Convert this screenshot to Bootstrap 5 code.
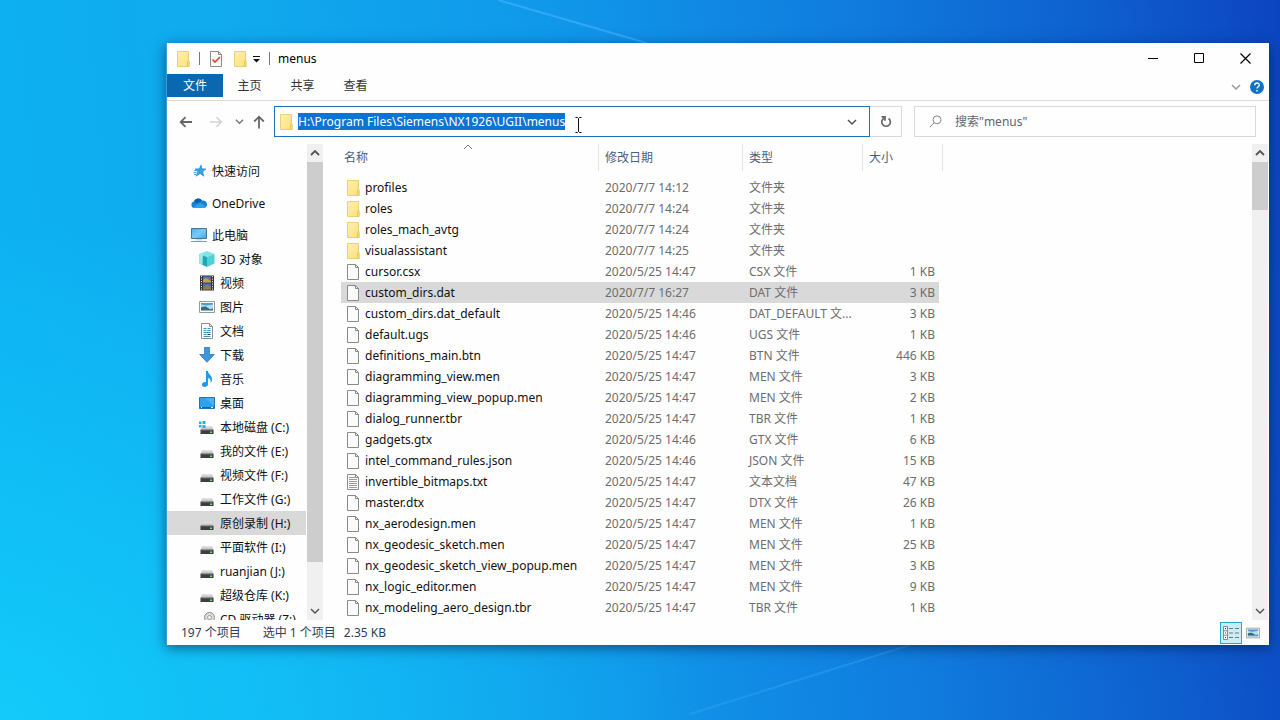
<!DOCTYPE html>
<html lang="zh-CN">
<head>
<meta charset="utf-8">
<meta name="viewport" content="width=device-width, initial-scale=1">
<title>menus</title>
<link href="https://cdn.jsdelivr.net/npm/bootstrap@5.3.0/dist/css/bootstrap.min.css" rel="stylesheet">
<style>
  body { font: 12px/21px "Noto Sans", "Noto Sans CJK SC", sans-serif; color: #111; }
  button, input { font: inherit; }
  .desktop {
    position: relative; height: 100vh; min-height: 480px; padding: 43px 11px 75px 166px;
    background:
      radial-gradient(ellipse 55% 70% at 0% 100%, rgba(20,208,252,.8), rgba(20,208,252,0)),
      linear-gradient(84deg, #0cb2f2 0%, #10aaee 22%, #1098ea 46%, #107cde 68%, #0e60cf 86%, #0c44c0 100%);
  }
  .rays { left: 0; top: 0; width: 100%; height: 100%; }
  .explorer { position: relative; background: #fefefe; border-left: 1px solid #3a9fd0; box-shadow: 0 3px 12px rgba(0,20,60,.55); }
  .explorer > * { flex-shrink: 0; }
  .bare { background: none; border: 0; padding: 0; color: inherit; display: flex; align-items: center; justify-content: center; }
  .titlebar { height: 31px; padding: 0 1px 0 8px; }
  .sep { width: 1px; height: 13px; background: #777; }
  .caption-btn { width: 46px; height: 31px; }
  .ribbon { height: 27px; border-bottom: 1px solid #dadbdc; }
  .ribbon .nav-link { font-size: 12px; line-height: 23px; height: 23px; padding: 0; width: 53px; text-align: center; color: #333; border-radius: 0; }
  .ribbon .nav-link.active { background: #0a68b0; color: #fff; width: 56px; }
  .toolbar { height: 43px; padding: 5px 13px 7px 8px; }
  .address { border: 1px solid #1a73b8; width: 596px; min-width: 200px; flex: 0 1 596px; background: #fff; padding-left: 3px; }
  .address input { border: 0; outline: 0; padding: 0; margin-left: 4px; height: 17px; line-height: 17px; color: #222; background: transparent; }
  .address input::selection { background: #0c74d4; color: #fff; }
  .ibeam { left: 299px; top: 9px; pointer-events: none; }
  .refresh { width: 32px; border: 1px solid #d9d9d9; border-left: 0; }
  .search { margin-left: 12px; padding-left: 14px; gap: 13px; border: 1px solid #d9d9d9; }
  .search input { border: 0; outline: 0; padding: 0; background: transparent; }
  .search input::placeholder { color: #666; opacity: 1; }
  .content { flex: 1 1 0; min-height: 0; }
  .side { width: 140px; padding-top: 15px; }
  .side a { display: flex; align-items: center; gap: 5px; height: 24px; flex: none; color: #111; text-decoration: none; white-space: nowrap; padding-left: 32px; }
  .side .root { padding-left: 24px; margin-bottom: 8px; }
  .side .root.last { margin-bottom: 0; }
  .side .current { background: #d9d9d9; margin-right: 1px; }
  .side svg, .files svg { flex: none; }
  .bar { width: 16px; background: #f0f0f0; flex: none; }
  .bar button { height: 18px; width: 100%; flex: none; color: #555; }
  .bar.outer { margin-right: 1px; }
  .thumb { background: #cdcdcd; }
  .filepane { padding-left: 18px; }
  .files { table-layout: fixed; width: 602px; border-collapse: separate; border-spacing: 0; }
  .files th { font-weight: 400; color: #4c607a; height: 27px; padding: 0 6px; border-right: 1px solid #e5e5e5; }
  .files th:first-child { padding-left: 3px; }
  .files td { height: 21px; line-height: 21px; padding: 0 6px; color: #6d6d6d; white-space: nowrap; overflow: hidden; text-overflow: ellipsis; }
  .files td:first-child { padding-left: 4px; color: #111; }
  .files td:nth-child(3) { padding-right: 11px; }
  .files td:nth-child(4) { text-align: right; padding-right: 4px; }
  .files td:last-child { padding: 0; }
  .files tbody::before { content: ""; display: block; height: 6px; }
  .files .picked td:not(:last-child) { background: #d9d9d9; }
  .name-cell { display: flex; align-items: center; gap: 4px; }
  .sort-mark { left: 140px; top: -1px; color: #777; }
  .statusbar { height: 25px; padding: 0 5px 0 14px; color: #2c3f5c; }
  .view-on { width: 22px; height: 22px; background: #c8ecf8; border: 1px solid #30a5cc; }
</style>
</head>
<body>
<svg width="0" height="0" class="position-absolute" aria-hidden="true">
  <defs>
    <linearGradient id="gFold" x1="0" y1="0" x2="1" y2="1"><stop offset="0" stop-color="#fff0ac"/><stop offset="1" stop-color="#fbe07c"/></linearGradient>
    <linearGradient id="gScreen" x1="0" y1="0" x2="1" y2="1"><stop offset="0" stop-color="#4fb0ec"/><stop offset=".5" stop-color="#7ccbf6"/><stop offset="1" stop-color="#38a4ea"/></linearGradient>
    <linearGradient id="gDrive" x1="0" y1="0" x2="0" y2="1"><stop offset="0" stop-color="#e8e8e8"/><stop offset="1" stop-color="#b4b4b4"/></linearGradient>
    <symbol id="folder" viewBox="0 0 16 16"><path d="M2.500.5h11v10h.5v5H2.500z" fill="url(#gFold)" stroke="#ead078"/><path d="M12.500 15.500v-5l1-1h.5v6z" fill="#fde794" stroke="#e2c050" stroke-width=".8"/></symbol>
    <symbol id="page" viewBox="0 0 16 16"><path d="M2.500.5h8l3 3v12h-11z" fill="#fafbfb" stroke="#8a8a8a"/><path d="M10.500.5v3h3" fill="none" stroke="#8a8a8a"/></symbol>
    <symbol id="textpage" viewBox="0 0 16 16"><path d="M2.500.5h8l3 3v12h-11z" fill="#fafbfb" stroke="#8a8a8a"/><path d="M4 3.500h6M4 5.500h8M4 7.500h8M4 9.500h8M4 11.500h8M4 13.500h8" stroke="#999"/><path d="M10.500.5v3h3" fill="none" stroke="#8a8a8a"/></symbol>
    <symbol id="star" viewBox="0 0 16 16"><path d="M10 2l1 3.800 4 .2-3.300 2.600 1 4.600-3.600-2.700-4 2.700 1.800-4.600L4 6l4.300-.2z" fill="#36a2e6" stroke="#1b80c6" stroke-width=".6"/><path d="M3 7.500h2.500M2.500 9.500h3M3 11.500h2" stroke="#4aaee8"/></symbol>
    <symbol id="cloud" viewBox="0 0 16 16"><path d="M3.500 13a3.300 3.300 0 0 1-.6-6.500A4.500 4.500 0 0 1 11 5.600a3.900 3.900 0 0 1 5 3.800C16 11.500 14.500 13 12.700 13z" fill="#1583d4"/><path d="M2.900 6.500A4.500 4.500 0 0 1 11 5.600L6.500 8.500z" fill="#0b5cad"/><path d="M1.500 12.500l7.500-5 6 4.300c-.6.800-1.400 1.200-2.300 1.200H3.500c-.8 0-1.500-.2-2-.5z" fill="#2ea0e6"/></symbol>
    <symbol id="pc" viewBox="0 0 16 16"><path d="M.5 1.500h15v10H.5z" fill="url(#gScreen)" stroke="#4d7388"/><path d="M5 12h6v1.500H5z" fill="#c5dce8"/><path d="M0 14.500h16" stroke="#7f9aac"/></symbol>
    <symbol id="cube" viewBox="0 0 16 16"><path d="M8 0l7.500 3L8 6 .5 3z" fill="#83e2e6"/><path d="M.5 3L8 6v10L.5 12.500z" fill="#21a6b4"/><path d="M15.500 3L8 6v10l7.500-3.500z" fill="#4fd0d6"/><path d="M.5 3L4 1.500 3.500 14l-3-1.500z" fill="#9aebe8"/></symbol>
    <symbol id="film" viewBox="0 0 16 16"><path d="M1 .5h14v15H1z" fill="#333"/><path d="M4 1.500h8v6H4z" fill="#5678c8"/><path d="M4 5l3-2 5 3v1.500H4z" fill="#c8a040"/><path d="M9 2h3v3z" fill="#d04838"/><path d="M4 8.500h8v6H4z" fill="#4a70c4"/><path d="M4 13l4-3 4 2v2.500H4z" fill="#a0783c"/><path d="M2.500 1v14M13.500 1v14" stroke="#eee" stroke-dasharray="1.200 1.300"/></symbol>
    <symbol id="photo" viewBox="0 0 16 16"><path d="M.5 2.500h15v11H.5z" fill="#fff" stroke="#929aa0"/><path d="M2 4h12v8H2z" fill="#b4dcf4"/><path d="M2 4h12v1.500L7 6.500 2 5.500z" fill="#5596cc"/><path d="M2 8.500q4-2 7 .5t5 0v2H2z" fill="#356e72"/><path d="M2 11h12v1H2z" fill="#8fb8c8"/></symbol>
    <symbol id="doc" viewBox="0 0 16 16"><path d="M2.500.5h8l3 3v12h-11z" fill="#fff" stroke="#8b8f92"/><path d="M10.500.5v3h3" fill="none" stroke="#8b8f92"/><path d="M4.500 5.500h3M8.500 5.500h3M4.500 7.500h3M8.500 7.500h3M4.500 9.500h7M4.500 11.500h3M4.500 13.500h7" stroke="#3d96c4"/><path d="M8.500 11.500h3" stroke="#333"/></symbol>
    <symbol id="down" viewBox="0 0 16 16"><path d="M5.500.5h5v7h4.800L8 15.300.7 7.500h4.800z" fill="#3f96dc" stroke="#2c79ba" stroke-width=".8"/></symbol>
    <symbol id="note" viewBox="0 0 16 16"><path d="M7 0h2c0 3.500 4.500 4 4 9-.1 1.200-.8 2.400-1.600 3 .8-3-.4-4.500-2.400-5v6.200C9 15 7.200 16 5.500 16S3 15 3 13.500 4.500 11 6 11c.4 0 .7 0 1 .2z" fill="#1e9be8"/></symbol>
    <symbol id="desk" viewBox="0 0 16 16"><path d="M.5 2.500h15v11H.5z" fill="#2da0ee" stroke="#1a76b8"/><path d="M6 3h9v8z" fill="#56b8f6" opacity=".7"/><path d="M1 12.500h14" stroke="#17659f"/><path d="M2 12.500h1M12 12.500h2" stroke="#fff"/></symbol>
    <symbol id="drive" viewBox="0 0 16 16"><path d="M3 7h10l1.500 4h-13z" fill="url(#gDrive)"/><path d="M1.500 11h13v4h-13z" fill="#3c3f40"/><path d="M1.500 10.500h13v1h-13z" fill="#6a6d6e"/><path d="M11 12.500h2v1.500h-2z" fill="#5bef6a"/></symbol>
    <symbol id="sysdrive" viewBox="0 0 16 16"><path d="M3 7h10l1.500 4h-13z" fill="url(#gDrive)"/><path d="M1.500 11h13v4h-13z" fill="#3c3f40"/><path d="M1.500 10.500h13v1h-13z" fill="#6a6d6e"/><path d="M11 12.500h2v1.500h-2z" fill="#5bef6a"/><path d="M0 2.500h2.500v2.500H0zM3.500 2h3v3h-3zM0 6h2.500v2.500H0zM3.500 6h3v3h-3z" fill="#22b4e4"/></symbol>
    <symbol id="disc" viewBox="0 0 16 16"><circle cx="10.500" cy="6.500" r="5" fill="#ddd" stroke="#8c8c8c"/><circle cx="10.500" cy="6.500" r="2" fill="#fff" stroke="#999"/><path d="M1.500 11h10v3h-10z" fill="#777"/></symbol>
    <symbol id="cd" viewBox="0 0 10 10"><path d="M1 3l4 4 4-4" fill="none" stroke="currentColor" stroke-width="1.500"/></symbol>
    <symbol id="cu" viewBox="0 0 10 10"><path d="M1 7l4-4 4 4" fill="none" stroke="currentColor" stroke-width="1.800"/></symbol>
  </defs>
</svg>

<div class="desktop">
  <svg class="rays position-absolute" viewBox="0 0 1280 720" preserveAspectRatio="none" aria-hidden="true">
    <path d="M498 0L650 44" stroke="#4ab8ff" stroke-width="2" opacity=".55"/>
    <path d="M690 714L910 645" stroke="#3aa8f4" stroke-width="2" opacity=".4"/>
  </svg>
  <main class="explorer d-flex flex-column h-100">
    <header class="titlebar d-flex align-items-center">
      <svg width="16" height="16"><use href="#folder"/></svg>
      <span class="sep ms-2"></span>
      <button class="bare ms-2" aria-label="属性"><svg width="16" height="16" viewBox="0 0 16 16"><path d="M2.500.5h8l3 3v12h-11z" fill="#fafafa" stroke="#8a8a8a"/><path d="M10.500.5v3h3" fill="none" stroke="#8a8a8a"/><path d="M4.500 8.500l2.500 2.500 5-5" fill="none" stroke="#dc4a26" stroke-width="1.600"/></svg></button>
      <button class="bare ms-2" aria-label="新建文件夹"><svg width="16" height="16"><use href="#folder"/></svg></button>
      <button class="bare ms-1" aria-label="自定义快速访问工具栏"><svg width="9" height="9" viewBox="0 0 9 9"><path d="M1 2.500h7" stroke="#111"/><path d="M1 5h7L4.500 8.500z" fill="#111"/></svg></button>
      <span class="sep ms-2"></span>
      <span class="ms-2 text-black">menus</span>
      <div class="ms-auto d-flex">
        <button class="bare caption-btn" aria-label="最小化"><svg width="11" height="11"><path d="M0 5.500h10" stroke="#000"/></svg></button>
        <button class="bare caption-btn" aria-label="最大化"><svg width="11" height="11"><path d="M.5.5h9v9h-9z" fill="none" stroke="#000"/></svg></button>
        <button class="bare caption-btn" aria-label="关闭"><svg width="11" height="11"><path d="M.5.500l10 10M10.500.5l-10 10" stroke="#000" stroke-width="1.200"/></svg></button>
      </div>
    </header>

    <nav class="ribbon nav flex-nowrap">
      <a class="nav-link active" href="#">文件</a>
      <a class="nav-link" href="#">主页</a>
      <a class="nav-link" href="#">共享</a>
      <a class="nav-link" href="#">查看</a>
      <div class="ms-auto d-flex align-items-center gap-2 pe-1">
        <button class="bare" style="color:#999" aria-label="展开功能区"><svg width="10" height="10"><use href="#cd"/></svg></button>
        <button class="bare" aria-label="帮助"><svg width="16" height="16" viewBox="0 0 16 16"><circle cx="8" cy="8" r="7" fill="#0f72c4"/><path d="M5.800 6.300c0-3 4.500-3 4.500-.3C10.300 7.700 8 7.800 8 9.500M8 11v1.500" fill="none" stroke="#fff" stroke-width="1.400"/></svg></button>
      </div>
    </nav>

    <div class="toolbar d-flex">
      <button class="bare px-1" aria-label="后退"><svg width="14" height="14" viewBox="0 0 14 14"><path d="M13 7H2M6.500 2.200L1.700 7l4.800 4.800" fill="none" stroke="#666" stroke-width="1.800"/></svg></button>
      <button class="bare px-1 ms-2" aria-label="前进"><svg width="14" height="14" viewBox="0 0 14 14"><path d="M1 7h11M7.500 2.200L12.300 7l-4.800 4.800" fill="none" stroke="#d2d2d2" stroke-width="1.600"/></svg></button>
      <button class="bare ms-2" style="color:#777" aria-label="最近位置"><svg width="9" height="9"><use href="#cd"/></svg></button>
      <button class="bare ms-2 me-2" aria-label="上移"><svg width="14" height="14" viewBox="0 0 14 14"><path d="M7 13.500V2M2.200 6.500L7 1.700l4.800 4.800" fill="none" stroke="#666" stroke-width="1.800"/></svg></button>
      <div class="address d-flex align-items-center position-relative">
        <svg class="flex-shrink-0" width="16" height="16"><use href="#folder"/></svg>
        <input class="flex-grow-1" id="path" type="text" aria-label="地址" spellcheck="false" value="H:\Program Files\Siemens\NX1926\UGII\menus">
        <button class="bare px-2 me-1" style="color:#555" aria-label="以前的位置"><svg width="10" height="10"><use href="#cd"/></svg></button>
        <svg class="ibeam position-absolute" width="10" height="18" viewBox="0 0 10 18"><path d="M1.500 1.500h2l1 1 1-1h2M1.500 16.500h2l1-1 1 1h2M4.500 2.500v13" fill="none" stroke="#111"/></svg>
      </div>
      <button class="bare refresh" aria-label="刷新"><svg width="12" height="14" viewBox="0 0 12 14"><path d="M4 3.200A4.300 4.300 0 1 0 8.600 3.500M1.500 1.800h3.500v4" fill="none" stroke="#666" stroke-width="1.700"/></svg></button>
      <label class="search d-flex align-items-center flex-grow-1">
        <svg width="13" height="13" viewBox="0 0 13 13"><circle cx="8" cy="4.800" r="4" fill="none" stroke="#888"/><path d="M5.200 7.700L.8 12.200" stroke="#888"/></svg>
        <input class="flex-grow-1" type="text" aria-label="搜索" placeholder='搜索"menus"'>
      </label>
    </div>

    <div class="content d-flex overflow-hidden">
      <nav class="side d-flex flex-column overflow-hidden flex-shrink-0" id="side" aria-label="导航窗格"></nav>
      <div class="bar d-flex flex-column">
        <button class="bare" aria-label="向上滚动"><svg width="10" height="10"><use href="#cu"/></svg></button>
        <div class="thumb" style="height:84%"></div>
        <button class="bare mt-auto" aria-label="向下滚动"><svg width="10" height="10"><use href="#cd"/></svg></button>
      </div>
      <section class="filepane flex-grow-1 overflow-hidden position-relative">
        <table class="files">
          <colgroup><col style="width:258px"><col style="width:144px"><col style="width:120px"><col style="width:76px"><col style="width:4px"></colgroup>
          <thead><tr>
            <th scope="col">名称</th><th scope="col">修改日期</th><th scope="col">类型</th><th scope="col" colspan="2">大小</th>
          </tr></thead>
          <tbody id="rows"></tbody>
        </table>
        <svg class="sort-mark position-absolute" width="10" height="8" viewBox="0 0 10 8"><path d="M1 6l4-4 4 4" fill="none" stroke="currentColor"/></svg>
      </section>
      <div class="bar outer d-flex flex-column">
        <button class="bare" aria-label="向上滚动"><svg width="10" height="10"><use href="#cu"/></svg></button>
        <div class="thumb" style="height:10%"></div>
        <button class="bare mt-auto" aria-label="向下滚动"><svg width="10" height="10"><use href="#cd"/></svg></button>
      </div>
    </div>

    <footer class="statusbar d-flex align-items-center">
      <span>197 个项目</span><span style="margin-left:22px">选中 1 个项目</span><span class="ms-2">2.35 KB</span>
      <button class="bare view-on ms-auto" aria-label="详细信息"><svg width="18" height="14" viewBox="0 0 18 14"><path d="M1.500.5h4v13h-4zM1.500 4.800h4M1.500 9.200h4" fill="#fff" stroke="#888"/><path d="M3 2.500h1M3 7h1M3 11.500h1" stroke="#333"/><path d="M7 2.500h4M13 2.500h4M7 7h4M13 7h4M7 11.500h4M13 11.500h4" stroke="#777"/></svg></button>
      <button class="bare ms-1 me-1" aria-label="大图标"><svg width="14" height="14"><use href="#photo"/></svg></button>
    </footer>
  </main>
</div>

<script src="https://cdn.jsdelivr.net/npm/bootstrap@5.3.0/dist/js/bootstrap.bundle.min.js"></script>
<script>
  const icon = id => `<svg width="16" height="16" aria-hidden="true"><use href="#${id}"/></svg>`;
  const places = [
    ["star", "快速访问", "root"], ["cloud", "OneDrive", "root"], ["pc", "此电脑", "root last"],
    ["cube", "3D 对象"], ["film", "视频"], ["photo", "图片"], ["doc", "文档"], ["down", "下载"],
    ["note", "音乐"], ["desk", "桌面"], ["sysdrive", "本地磁盘 (C:)"], ["drive", "我的文件 (E:)"],
    ["drive", "视频文件 (F:)"], ["drive", "工作文件 (G:)"], ["drive", "原创录制 (H:)", "current"],
    ["drive", "平面软件 (I:)"], ["drive", "ruanjian (J:)"], ["drive", "超级仓库 (K:)"], ["disc", "CD 驱动器 (Z:)"]
  ];
  document.getElementById("side").innerHTML = places
    .map(([i, t, c]) => `<a href="#" class="${c || ""}">${icon(i)}<span>${t}</span></a>`).join("");

  const files = [
    ["profiles", "2020/7/7 14:12", "文件夹", ""], ["roles", "2020/7/7 14:24", "文件夹", ""],
    ["roles_mach_avtg", "2020/7/7 14:24", "文件夹", ""], ["visualassistant", "2020/7/7 14:25", "文件夹", ""],
    ["cursor.csx", "2020/5/25 14:47", "CSX 文件", "1 KB"], ["custom_dirs.dat", "2020/7/7 16:27", "DAT 文件", "3 KB"],
    ["custom_dirs.dat_default", "2020/5/25 14:46", "DAT_DEFAULT 文...", "3 KB"], ["default.ugs", "2020/5/25 14:46", "UGS 文件", "1 KB"],
    ["definitions_main.btn", "2020/5/25 14:47", "BTN 文件", "446 KB"], ["diagramming_view.men", "2020/5/25 14:47", "MEN 文件", "3 KB"],
    ["diagramming_view_popup.men", "2020/5/25 14:47", "MEN 文件", "2 KB"], ["dialog_runner.tbr", "2020/5/25 14:47", "TBR 文件", "1 KB"],
    ["gadgets.gtx", "2020/5/25 14:46", "GTX 文件", "6 KB"], ["intel_command_rules.json", "2020/5/25 14:46", "JSON 文件", "15 KB"],
    ["invertible_bitmaps.txt", "2020/5/25 14:47", "文本文档", "47 KB"], ["master.dtx", "2020/5/25 14:47", "DTX 文件", "26 KB"],
    ["nx_aerodesign.men", "2020/5/25 14:47", "MEN 文件", "1 KB"], ["nx_geodesic_sketch.men", "2020/5/25 14:47", "MEN 文件", "25 KB"],
    ["nx_geodesic_sketch_view_popup.men", "2020/5/25 14:47", "MEN 文件", "3 KB"], ["nx_logic_editor.men", "2020/5/25 14:47", "MEN 文件", "9 KB"],
    ["nx_modeling_aero_design.tbr", "2020/5/25 14:47", "TBR 文件", "1 KB"], ["", "", "", ""]
  ];
  document.getElementById("rows").innerHTML = files.map(([n, d, t, s]) => {
    const kind = t === "文件夹" ? "folder" : t === "文本文档" ? "textpage" : "page";
    return `<tr class="${n === "custom_dirs.dat" ? "picked" : ""}"><td><span class="name-cell">${icon(kind)}<span>${n}</span></span></td><td>${d}</td><td>${t}</td><td>${s}</td><td></td></tr>`;
  }).join("");

  const path = document.getElementById("path");
  path.focus();
  path.select();
</script>
</body>
</html>
